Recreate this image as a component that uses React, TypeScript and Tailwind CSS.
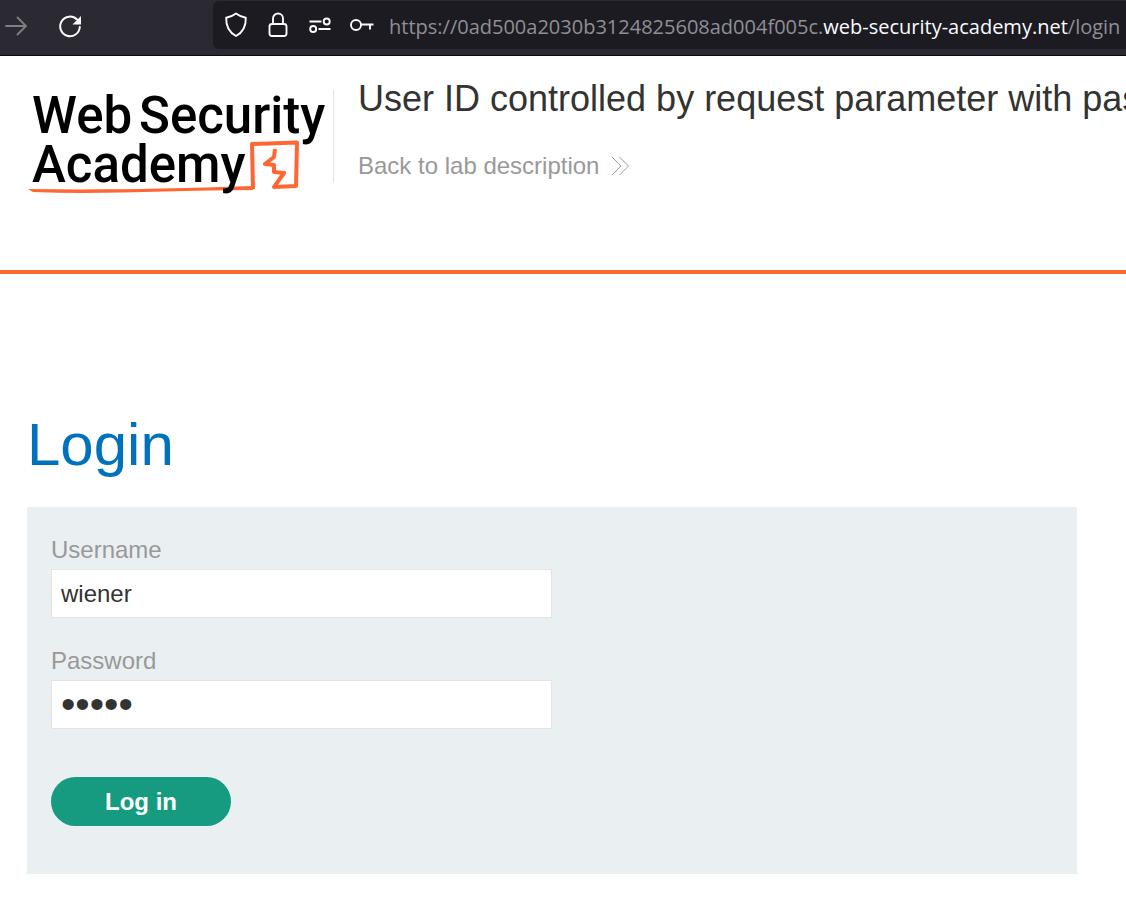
import React, { useState } from 'react';

const BrowserBar = () => {
  return (
    <div className="flex h-14 items-start border-b border-[#0c0c0d] bg-[#2b2a33]">
      <button aria-label="Forward" className="mt-3 ml-1 h-7 w-6 text-[#807f86]">
        <svg viewBox="0 0 24 28" fill="none" stroke="currentColor" strokeWidth="1.8" strokeLinecap="round">
          <path d="M2 14h20M13.500 5.500l8.500 8.500-8.500 8.500" />
        </svg>
      </button>
      <button aria-label="Reload" className="mt-3 ml-7 h-7 w-7 text-[#fbfbfe]">
        <svg viewBox="0 0 28 28" fill="none" stroke="currentColor" strokeWidth="2">
          <path d="M21 7.500a9.800 9.800 0 1 0 2.800 7.500" strokeLinecap="round" />
          <path d="M25 4v8.500h-8.500l3.500-3.500z" fill="currentColor" stroke="none" />
        </svg>
      </button>
      <div className="mt-px ml-[129px] flex h-12 min-w-0 flex-1 items-center overflow-hidden rounded-l-md bg-[#1c1b22] pl-2">
        <div className="flex shrink-0 items-center gap-[14px] text-[#fbfbfe]">
          <svg className="h-7 w-7" viewBox="0 0 28 28" fill="none" stroke="currentColor" strokeWidth="1.9" strokeLinejoin="round">
            <path d="M15 2.500c3 2.400 6.300 3.500 9.800 4.200.3 8-2.300 14.300-9.800 18.300C7.500 21 4.900 14.700 5.200 6.700c3.500-.7 6.800-1.800 9.800-4.200z" />
          </svg>
          <svg className="h-7 w-7" viewBox="0 0 28 28" fill="none" stroke="currentColor" strokeWidth="1.900">
            <rect x="6.500" y="13" width="17" height="12" rx="2.500" />
            <path d="M10 13V7.500a5 5 0 0 1 10 0V13" />
          </svg>
          <svg className="h-7 w-7" viewBox="0 0 28 28" fill="none" stroke="currentColor" strokeWidth="1.900">
            <circle cx="21.700" cy="10.500" r="3" />
            <circle cx="8.200" cy="18" r="3" />
            <path d="M4.500 10.500h12M13.500 18h12" />
          </svg>
          <svg className="h-7 w-7" viewBox="0 0 28 28" fill="none" stroke="currentColor" strokeWidth="1.900">
            <circle cx="9" cy="14" r="5" />
            <path d="M14 13.500h12.500M23 13.500v5" />
          </svg>
        </div>
        <p className="ml-[14px] pt-1 font-['Open_Sans','Noto_Sans',sans-serif] text-[20px] whitespace-nowrap text-[#8f8f95]">
          https://0ad500a2030b3124825608ad004f005c.
          <span className="text-[#fbfbfe]">web-security-academy.net</span>
          /login
        </p>
      </div>
    </div>
  );
};

const Logo = () => {
  return (
    <svg
      className="h-[110px] w-[304px]"
      viewBox="0 0 304 110"
      role="img"
      aria-label="Web Security Academy"
    >
      <path
        d="M225 104l-1-45 45-1.500-1 43.500-22 1 10-14-10-1v-7l-9-1 9-7 1-8"
        fill="none"
        stroke="#ff6633"
        strokeWidth="4"
        strokeLinejoin="round"
      />
      <path d="M0 104c70 1 140 0 225-3v4c-80 0-150 5-220 2z" fill="#ff6633" />
      <g fill="#000" className="font-['Roboto',sans-serif] text-[51px] font-medium">
        <text x="4" y="48">Web</text>
        <text x="111" y="48">Security</text>
        <text x="4" y="97">Academy</text>
      </g>
    </svg>
  );
};

const Header = () => {
  return (
    <header className="flex h-[218px] overflow-hidden border-b-4 border-[#ff6633] pt-[29px] pl-7">
      <a href="#academy" className="block shrink-0">
        <Logo />
      </a>
      <div className="mt-[5px] ml-px h-[93px] w-px shrink-0 bg-[#e4e4e4]" />
      <div className="ml-6 min-w-0 whitespace-nowrap">
        <h2 className="-mt-[6px] text-[36px] leading-10 text-[#333332]">
          User ID controlled by request parameter with password disclosure
        </h2>
        <a href="#lab" className="mt-[31px] inline-flex items-center text-2xl leading-8 text-[#999]">
          Back to lab description
          <svg className="ml-3 h-5 w-5" viewBox="0 0 20 20" fill="none" stroke="currentColor">
            <path d="M1 1l9 9-9 9M8.500 1l9 9-9 9" />
          </svg>
        </a>
      </div>
    </header>
  );
};

const App = () => {
  const [username, setUsername] = useState('wiener');
  const [password, setPassword] = useState('peter');

  return (
    <div className="min-h-screen bg-white font-['Liberation_Sans',Arial,sans-serif]">
      <BrowserBar />
      <Header />
      <main className="mr-[49px] ml-[27px] pt-[135px]">
        <h1 className="text-[60px] leading-[72px] text-[#0071bd]">Login</h1>
        <form
          className="mt-[26px] flex flex-col items-start bg-[#eaf0f2] px-6 pt-7 pb-12"
          onSubmit={(e) => e.preventDefault()}
        >
          <label htmlFor="username" className="text-2xl leading-[30px] text-[#999]">
            Username
          </label>
          <input
            id="username"
            type="text"
            value={username}
            onChange={(e) => setUsername(e.target.value)}
            className="mt-1 h-[49px] w-full max-w-[501px] border border-[#e4e4e4] bg-white px-[9px] text-2xl text-[#333332] outline-none"
          />
          <label htmlFor="password" className="mt-7 text-2xl leading-[30px] text-[#999]">
            Password
          </label>
          {/* larger size only affects the masking dots */}
          <input
            id="password"
            type="password"
            value={password}
            onChange={(e) => setPassword(e.target.value)}
            className="mt-1 h-[49px] w-full max-w-[501px] border border-[#e4e4e4] bg-white px-[9px] text-[41px] text-[#333332] outline-none"
          />
          <button
            type="submit"
            className="mt-12 h-[49px] w-[180px] rounded-full bg-[#169b80] text-2xl font-bold text-white"
          >
            Log in
          </button>
        </form>
      </main>
    </div>
  );
};

export default App;
